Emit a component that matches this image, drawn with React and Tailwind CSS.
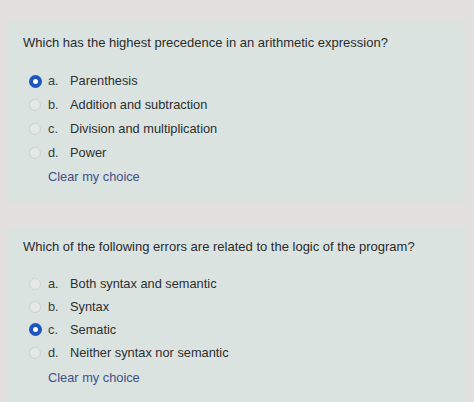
import React from "react";

function Radio({ checked }) {
  if (checked) {
    return (
      <span className="flex h-[13px] w-[13px] items-center justify-center rounded-full bg-[#1c55bd]">
        <span className="h-[5px] w-[5px] rounded-full bg-white" />
      </span>
    );
  }
  return <span className="h-[12px] w-[12px] rounded-full border border-[#cdd3d1] bg-[#e4e9e8]" />;
}

function Question({ q, options, selected, rowH, pt, qGap, clearGap, h }) {
  return (
    <div className={`ml-[7px] w-[459px] bg-[#dbe3e1] pl-[16px] ${pt} ${h}`}>
      <div className="text-[13px] leading-[18px] text-[#2a2c2c]">{q}</div>
      <div className={`flex flex-col ${qGap}`}>
        {options.map((o, i) => (
          <div key={i} className={`flex items-center text-[12.8px] leading-[16px] text-[#2d2f2f] ${rowH}`}>
            <span className="flex w-[24px] items-center justify-center">
              <Radio checked={i === selected} />
            </span>
            <span className="ml-[1px] w-[22px] text-[#3a3c3c]">{o[0]}</span>
            <span>{o[1]}</span>
          </div>
        ))}
      </div>
      <div className={`pl-[25px] text-[12.8px] leading-[20px] text-[#3f4f86] ${clearGap}`}>Clear my choice</div>
    </div>
  );
}

export default function App() {
  return (
    <div
      className="h-[402px] w-[474px] overflow-hidden bg-[#e2e1df] pt-[22px]"
      style={{ fontFamily: "'Liberation Sans', Arial, sans-serif" }}
    >
      <Question
        q="Which has the highest precedence in an arithmetic expression?"
        options={[
          ["a.", "Parenthesis"],
          ["b.", "Addition and subtraction"],
          ["c.", "Division and multiplication"],
          ["d.", "Power"],
        ]}
        selected={0}
        pt="pt-[12px]"
        qGap="mt-[17px]"
        rowH="h-[24px]"
        clearGap="mt-[2px]"
        h="h-[180px]"
      />
      <div className="h-[25px]" />
      <Question
        q="Which of the following errors are related to the logic of the program?"
        options={[
          ["a.", "Both syntax and semantic"],
          ["b.", "Syntax"],
          ["c.", "Sematic"],
          ["d.", "Neither syntax nor semantic"],
        ]}
        selected={2}
        pt="pt-[11px]"
        qGap="mt-[16px]"
        rowH="h-[23px]"
        clearGap="mt-[4px]"
        h="h-[200px]"
      />
    </div>
  );
}
